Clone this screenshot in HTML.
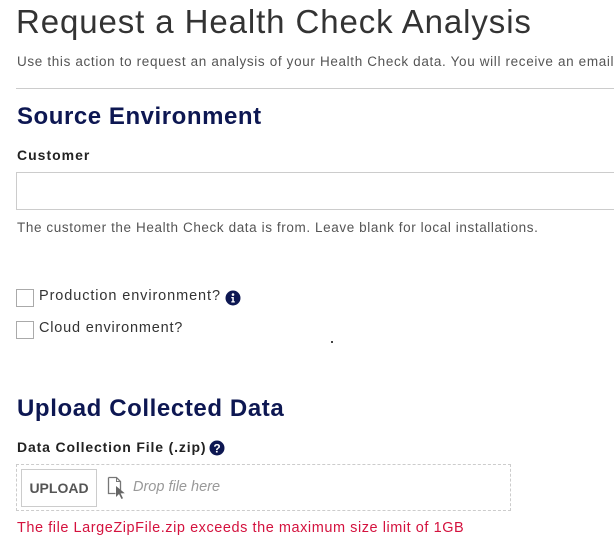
<!DOCTYPE html>
<html><head><style>
body{margin:0;width:614px;height:545px;overflow:hidden;background:#fff;font-family:"Liberation Sans",sans-serif;color:#333;position:relative}
.a{position:absolute;white-space:nowrap}
h1{position:absolute;left:16px;top:3px;margin:0;font-weight:normal;font-size:33px;color:#333;letter-spacing:0.9px}
.sub{left:17px;top:54px;font-size:13.5px;color:#555;letter-spacing:0.65px}
.hr{left:16px;top:88px;width:598px;height:1px;background:#ccc}
.h2{font-weight:bold;font-size:24px;color:#0d1752}
.lab{font-weight:bold;font-size:14px;color:#222}
.cb{position:absolute;width:16px;height:16px;border:1px solid #aaa;left:16px;background:#fff}
</style></head><body>
<h1>Request a Health Check Analysis</h1>
<div class="a sub">Use this action to request an analysis of your Health Check data. You will receive an email</div>
<div class="a hr"></div>
<div class="a h2" style="left:17px;top:103px;letter-spacing:0.55px">Source Environment</div>
<div class="a lab" style="left:17px;top:147px;letter-spacing:1px">Customer</div>
<div class="a" style="left:16px;top:172px;width:610px;height:36px;border:1px solid #ccc"></div>
<div class="a" style="left:17px;top:220px;font-size:13.5px;color:#555;letter-spacing:0.6px">The customer the Health Check data is from. Leave blank for local installations.</div>
<div class="cb" style="top:289px"></div>
<div class="a" style="left:39px;top:288px;font-size:14.5px;color:#333;letter-spacing:0.9px">Production environment?</div>
<svg class="a" style="left:225px;top:290px" width="16" height="16" viewBox="0 0 16 16"><circle cx="8" cy="8" r="7.5" fill="#0d1752"/><circle cx="8" cy="4.6" r="1.3" fill="#fff"/><path d="M6.3 7h2.5v4.3h1v1.2H6.3v-1.2h1V8.2h-1z" fill="#fff"/></svg>
<div class="cb" style="top:321px"></div>
<div class="a" style="left:39px;top:320px;font-size:14.5px;color:#333;letter-spacing:0.8px">Cloud environment?</div>
<div class="a" style="left:331px;top:341px;width:2px;height:2px;background:#444"></div>
<div class="a h2" style="left:17px;top:395px;letter-spacing:0.6px">Upload Collected Data</div>
<div class="a lab" style="left:17px;top:439px;letter-spacing:0.85px">Data Collection File (.zip)</div>
<svg class="a" style="left:209px;top:440px" width="16" height="16" viewBox="0 0 16 16"><circle cx="8" cy="8" r="7.5" fill="#0d1752"/><text x="8" y="12.3" font-size="12" font-weight="bold" fill="#fff" text-anchor="middle" font-family="Liberation Sans">?</text></svg>
<div class="a" style="left:16px;top:464px;width:493px;height:45px;border:1px dashed #ccc"></div>
<div class="a" style="left:21px;top:469px;width:74px;height:36px;border:1px solid #ccc;font-weight:bold;font-size:14px;color:#555;text-align:center;line-height:36px">UPLOAD</div>
<svg class="a" style="left:107px;top:476px" width="20" height="24" viewBox="0 0 20 24"><path d="M1.5 1.5h8l4 4v9" fill="none" stroke="#777" stroke-width="1.3"/><path d="M1.5 1.5v16h7" fill="none" stroke="#777" stroke-width="1.3"/><path d="M9.5 1.5v4h4" fill="none" stroke="#777" stroke-width="1"/><path d="M9 10l0 11 3-3 2.5 5 1.5-.8-2.4-4.8 4.2-.2z" fill="#666"/></svg>
<div class="a" style="left:133px;top:479px;font-size:14.5px;font-style:italic;color:#999">Drop file here</div>
<div class="a" style="left:17px;top:520px;font-size:14.5px;color:#d4123e;letter-spacing:0.55px">The file LargeZipFile.zip exceeds the maximum size limit of 1GB</div>
</body></html>
